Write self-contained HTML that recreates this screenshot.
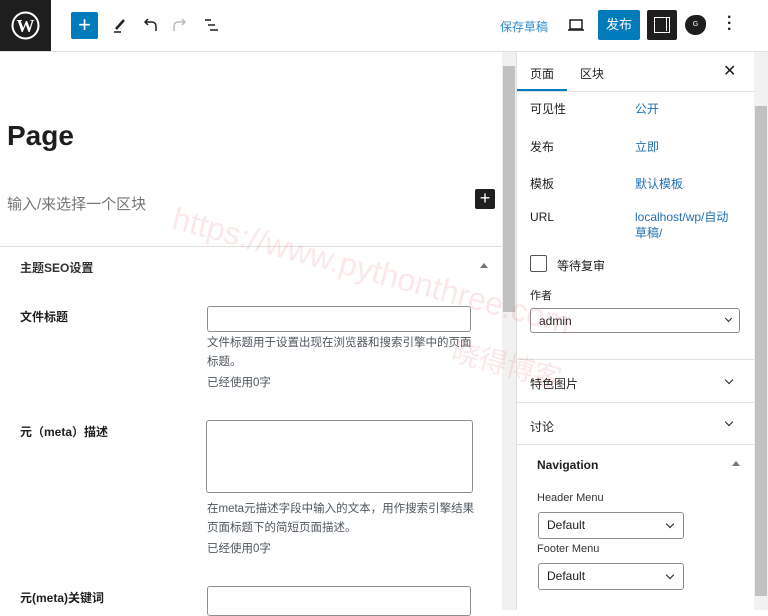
<!DOCTYPE html>
<html><head><meta charset="utf-8"><style>
*{box-sizing:border-box;margin:0;padding:0}
body{width:768px;height:610px;overflow:hidden;background:#fff;font-family:"Liberation Sans","Noto Sans CJK SC",sans-serif;color:#1e1e1e;position:relative;font-size:12px}
.a{position:absolute}
.blue{color:#2271b1}
.inp{position:absolute;border:1px solid #8c8f94;border-radius:3px;background:#fff}
.help{color:#50575e;font-size:11.5px;line-height:19px}
.lbl{font-weight:bold;font-size:12px}
.sel{position:absolute;border:1px solid #8c8f94;border-radius:3px;background:#fff;font-size:12px;padding-left:8px;line-height:24px}
.chev{position:absolute;width:6px;height:6px;border-right:1.5px solid #1e1e1e;border-bottom:1.5px solid #1e1e1e;transform:rotate(45deg)}
.wm{position:absolute;color:rgba(230,90,90,.14);transform:rotate(15deg);transform-origin:left top;white-space:nowrap}
</style></head><body>
<div class="a" style="left:0;top:0;width:51px;height:51px;background:#1e1e1e"></div>
<svg class="a" style="left:11px;top:11px" width="29" height="29" viewBox="0 0 29 29"><circle cx="14.5" cy="14.5" r="13" fill="none" stroke="#fff" stroke-width="2"/><text x="14.5" y="21" font-size="18" font-family="Liberation Serif" font-weight="bold" fill="#fff" text-anchor="middle">W</text></svg>
<div class="a" style="left:0;top:51px;width:768px;height:1px;background:#e0e0e0"></div>
<div class="a" style="left:71px;top:12px;width:27px;height:27px;background:#007cba;border-radius:2px;color:#fff;font-size:22px;line-height:26px;text-align:center">+</div>
<svg class="a" style="left:111px;top:16px" width="18" height="18"><path d="M5 13 L13 4" stroke="#1e1e1e" stroke-width="2.5"/><path d="M3 16 H10" stroke="#1e1e1e" stroke-width="1.5"/></svg>
<svg class="a" style="left:141px;top:16px" width="18" height="18"><path d="M15 15 V10 A4 4 0 0 0 11 6 H4 M7 3 L4 6 L7 9" fill="none" stroke="#1e1e1e" stroke-width="1.5"/></svg>
<svg class="a" style="left:171px;top:16px" width="18" height="18"><path d="M3 15 V10 A4 4 0 0 1 7 6 H14 M11 3 L14 6 L11 9" fill="none" stroke="#bbb" stroke-width="1.5"/></svg>
<svg class="a" style="left:202px;top:16px" width="18" height="18"><path d="M3 4 H9 M6 9 H13 M8 14 H16" stroke="#1e1e1e" stroke-width="1.5"/></svg>
<div class="a blue" style="left:500px;top:18px;font-size:12px;color:#2f8ccc">保存草稿</div>
<svg class="a" style="left:566px;top:16px" width="20" height="18"><rect x="4" y="4" width="12" height="9" fill="none" stroke="#1e1e1e" stroke-width="1.5"/><path d="M2 14 H18" stroke="#1e1e1e" stroke-width="1.5"/></svg>
<div class="a" style="left:598px;top:10px;width:42px;height:30px;background:#007cba;border-radius:2px;color:#fff;font-size:13px;line-height:30px;text-align:center">发布</div>
<div class="a" style="left:647px;top:10px;width:30px;height:30px;background:#1e1e1e;border-radius:2px"></div>
<div class="a" style="left:654px;top:17px;width:16px;height:16px;border:1.5px solid #fff"><div style="position:absolute;right:2px;top:0;width:1.5px;height:13px;background:#fff"></div></div>
<div class="a" style="left:685px;top:15px;width:21px;height:20px;background:#1e1e1e;border-radius:50% 40% 50% 50%;color:#fff;font-size:7px;line-height:20px;text-align:center">G</div>
<div class="a" style="left:727px;top:15px;font-size:16px;font-weight:bold;line-height:6px">·<br>·<br>·</div>
<div class="a" style="left:7px;top:120px;font-size:28px;font-weight:bold">Page</div>
<div class="a" style="left:7px;top:193px;font-size:15px;color:#757575">输入/来选择一个区块</div>
<div class="a" style="left:475px;top:189px;width:20px;height:20px;background:#1e1e1e;border-radius:2px;color:#fff;font-size:18px;line-height:19px;text-align:center">+</div>
<div class="a" style="left:0;top:246px;width:502px;height:1px;background:#e0e0e0"></div>
<div class="a" style="left:20px;top:259px;font-size:12px;font-weight:bold;color:#333">主题SEO设置</div>
<div class="a" style="left:480px;top:263px;width:0;height:0;border-left:4px solid transparent;border-right:4px solid transparent;border-bottom:5px solid #777"></div>
<div class="a lbl" style="left:20px;top:308px">文件标题</div>
<div class="inp" style="left:207px;top:306px;width:264px;height:26px"></div>
<div class="a help" style="left:207px;top:334px;width:268px">文件标题用于设置出现在浏览器和搜索引擎中的页面标题。</div>
<div class="a help" style="left:207px;top:374px">已经使用0字</div>
<div class="a lbl" style="left:20px;top:423px">元（meta）描述</div>
<div class="inp" style="left:206px;top:420px;width:267px;height:73px"></div>
<div class="a help" style="left:207px;top:500px;width:268px">在meta元描述字段中输入的文本，用作搜索引擎结果页面标题下的简短页面描述。</div>
<div class="a help" style="left:207px;top:540px">已经使用0字</div>
<div class="a lbl" style="left:20px;top:589px">元(meta)关键词</div>
<div class="inp" style="left:207px;top:586px;width:264px;height:30px"></div>
<div class="a" style="left:502px;top:52px;width:14px;height:558px;background:#f1f1f1"></div>
<div class="a" style="left:503px;top:66px;width:12px;height:246px;background:#c1c1c1"></div>
<div class="a" style="left:516px;top:52px;width:1px;height:558px;background:#e0e0e0"></div>
<div class="a" style="left:530px;top:65px;font-size:12px">页面</div>
<div class="a" style="left:580px;top:65px;font-size:12px">区块</div>
<div class="a" style="left:723px;top:61px;font-size:16px">✕</div>
<div class="a" style="left:517px;top:89px;width:50px;height:2px;background:#007cba"></div>
<div class="a" style="left:517px;top:91px;width:237px;height:1px;background:#e0e0e0"></div>
<div class="a" style="left:530px;top:100px">可见性</div><div class="a blue" style="left:635px;top:100px">公开</div>
<div class="a" style="left:530px;top:138px">发布</div><div class="a blue" style="left:635px;top:138px">立即</div>
<div class="a" style="left:530px;top:175px">模板</div><div class="a blue" style="left:635px;top:175px">默认模板</div>
<div class="a" style="left:530px;top:210px">URL</div><div class="a blue" style="left:635px;top:209px;line-height:16px;width:100px">localhost/wp/自动<br>草稿/</div>
<div class="a" style="left:530px;top:255px;width:17px;height:17px;border:1px solid #555;border-radius:2px"></div>
<div class="a" style="left:557px;top:257px">等待复审</div>
<div class="a" style="left:530px;top:287px;font-size:11px">作者</div>
<div class="sel" style="left:530px;top:308px;width:210px;height:25px">admin</div>
<div class="chev" style="left:726px;top:316px;width:5px;height:5px"></div>
<div class="a" style="left:517px;top:359px;width:237px;height:1px;background:#e0e0e0"></div>
<div class="a" style="left:530px;top:375px">特色图片</div><div class="chev" style="left:726px;top:377px"></div>
<div class="a" style="left:517px;top:402px;width:237px;height:1px;background:#e0e0e0"></div>
<div class="a" style="left:530px;top:418px">讨论</div><div class="chev" style="left:726px;top:419px"></div>
<div class="a" style="left:517px;top:444px;width:237px;height:1px;background:#e0e0e0"></div>
<div class="a" style="left:537px;top:458px;font-weight:bold">Navigation</div>
<div class="a" style="left:732px;top:461px;width:0;height:0;border-left:4px solid transparent;border-right:4px solid transparent;border-bottom:5px solid #777"></div>
<div class="a" style="left:537px;top:492px;font-size:11px;color:#333">Header Menu</div>
<div class="sel" style="left:538px;top:512px;width:146px;height:27px;line-height:25px">Default</div><div class="chev" style="left:667px;top:521px"></div>
<div class="a" style="left:537px;top:543px;font-size:11px;color:#333">Footer Menu</div>
<div class="sel" style="left:538px;top:563px;width:146px;height:27px;line-height:25px">Default</div><div class="chev" style="left:667px;top:572px"></div>
<div class="a" style="left:754px;top:52px;width:14px;height:558px;background:#f1f1f1"></div>
<div class="a" style="left:755px;top:106px;width:12px;height:490px;background:#c1c1c1"></div>
<div class="wm" style="left:178px;top:200px;font-size:32px">https://www.pythonthree.com</div>
<div class="wm" style="left:458px;top:330px;font-size:28px">晓得博客</div>
</body></html>
